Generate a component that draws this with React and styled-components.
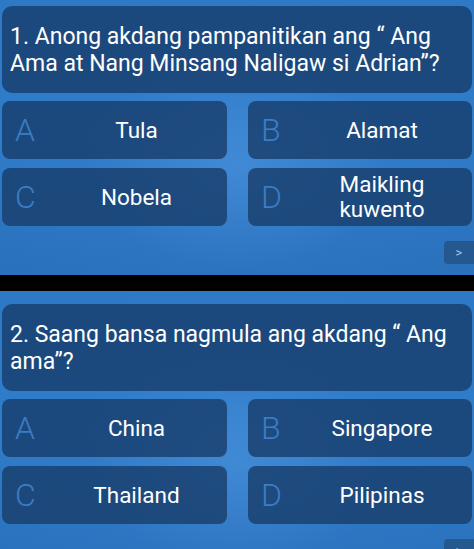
import React from 'react'
import styled, { createGlobalStyle } from 'styled-components'

const GlobalStyle = createGlobalStyle`
  html, body {
    margin: 0;
    padding: 0;
    background: #2c74be;
  }
  body {
    font-family: Roboto, "Noto Sans", "Liberation Sans", sans-serif;
    overflow: hidden;
  }
`

const questions = [
  {
    text: '1. Anong akdang pampanitikan ang “ Ang Ama at Nang Minsang Naligaw si Adrian”?',
    options: ['Tula', 'Alamat', 'Nobela', 'Maikling kuwento'],
  },
  {
    text: '2. Saang bansa nagmula ang akdang “ Ang ama”?',
    options: ['China', 'Singapore', 'Thailand', 'Pilipinas'],
  },
]

const letters = ['A', 'B', 'C', 'D']

function App() {
  return (
    <>
      <GlobalStyle />
      <Page>
        {questions.map((q, i) => (
          <React.Fragment key={i}>
            {i > 0 && <Divider />}
            <Section first={i === 0}>
              <QuestionCard>{q.text}</QuestionCard>
              <Options>
                {q.options.map((o, j) => (
                  <Option key={j}>
                    <Letter>{letters[j]}</Letter>
                    <Label>{o}</Label>
                  </Option>
                ))}
              </Options>
              <Footer>
                <NextButton>&gt;</NextButton>
              </Footer>
            </Section>
          </React.Fragment>
        ))}
      </Page>
    </>
  )
}

const Page = styled.div`
  width: 474px;
  height: 549px;
  overflow: hidden;
  display: flex;
  flex-direction: column;
`

const Section = styled.div`
  padding: ${p => (p.first ? '6px' : '13px')} 2px 11px;
  display: flex;
  flex-direction: column;
  background:
    radial-gradient(ellipse at 50% 60%, rgba(80, 150, 225, 0.55) 0%, rgba(60, 130, 210, 0.15) 45%, rgba(30, 90, 165, 0.0) 80%),
    linear-gradient(180deg, #2e79c6 0%, #2f7cc8 50%, #2a70bb 100%);
`

const QuestionCard = styled.div`
  height: 87px;
  box-sizing: border-box;
  padding: 0 20px 0 8px;
  display: flex;
  align-items: center;
  background: rgba(25, 62, 108, 0.82);
  border-radius: 10px;
  color: #ffffff;
  font-size: 23px;
  line-height: 27px;
`

const Options = styled.div`
  margin-top: 8px;
  display: grid;
  grid-template-columns: 225px 224px;
  column-gap: 21px;
  row-gap: 9px;
`

const Option = styled.div`
  height: 58px;
  display: flex;
  align-items: center;
  background: rgba(25, 62, 108, 0.82);
  border-radius: 8px;
`

const Letter = styled.span`
  width: 48px;
  padding-left: 13px;
  box-sizing: border-box;
  color: #3b7cc4;
  font-size: 32px;
  font-weight: 300;
  line-height: 1;
`

const Label = styled.span`
  flex: 1;
  text-align: center;
  color: #ffffff;
  font-size: 22.5px;
  line-height: 25px;
  padding-right: 4px;
`

const Footer = styled.div`
  margin-top: 15px;
  display: flex;
  justify-content: flex-end;
  margin-right: -2px;
`

const NextButton = styled.div`
  width: 30px;
  height: 23px;
  display: flex;
  align-items: center;
  justify-content: center;
  background: #24588f;
  border-radius: 4px 0 0 4px;
  color: #a9c5e8;
  font-size: 13px;
`

const Divider = styled.div`
  height: 16px;
  flex-shrink: 0;
  background: #000000;
`

export default App
